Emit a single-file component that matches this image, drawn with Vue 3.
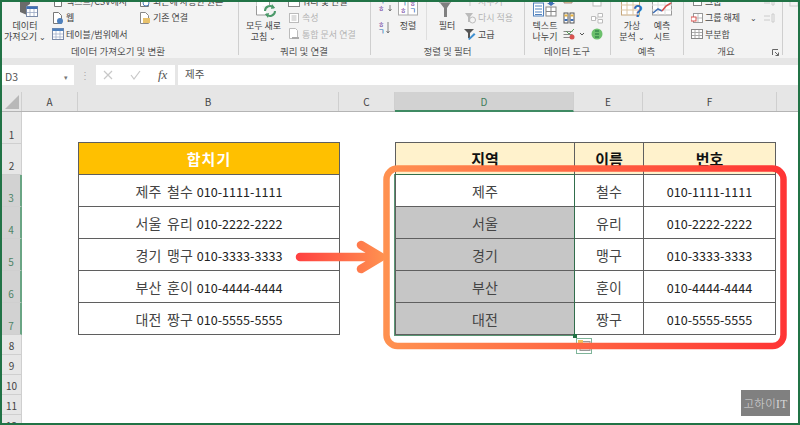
<script setup>
const colLabels = [
  { label: 'A', w: 56 },
  { label: 'B', w: 261 },
  { label: 'C', w: 56 },
  { label: 'D', w: 179, sel: true },
  { label: 'E', w: 69 },
  { label: 'F', w: 134 }
]
const rowLabels = [
  { n: 1, h: 32 }, { n: 2, h: 31 }, { n: 3, h: 32, sel: true }, { n: 4, h: 32, sel: true },
  { n: 5, h: 32, sel: true }, { n: 6, h: 32, sel: true }, { n: 7, h: 32, sel: true },
  { n: 8, h: 20 }, { n: 9, h: 20 }, { n: 10, h: 20 }, { n: 11, h: 20 }, { n: 12, h: 20 }
]
const people = [
  ['제주', '철수', '010-1111-1111'],
  ['서울', '유리', '010-2222-2222'],
  ['경기', '맹구', '010-3333-3333'],
  ['부산', '훈이', '010-4444-4444'],
  ['대전', '짱구', '010-5555-5555']
]
</script>

<template>
  <div class="app">
    <div class="ribbon">
      <section class="group g1">
        <div class="body">
          <div class="big w44">
            <svg class="bigicon" width="34" height="20" viewBox="0 0 34 20">
              <path d="M12 -4h10v8l-3 2v9l-7-3z" fill="#6b6b6b"/>
              <path d="M7 -4h6l-1 5z" fill="#e8b23c"/>
              <rect x="18.500" y="6.500" width="11" height="10" fill="#fff" stroke="#7a8aa8"/>
              <rect x="18.500" y="6.500" width="11" height="2.500" fill="#3f6fb5"/>
              <path d="M22 9v7M26 9v7M19 12.500h10" stroke="#9aa8c4" stroke-width=".8"/>
            </svg>
            <span>데이터</span><span>가져오기 <i class="chev">⌄</i></span>
          </div>
          <div class="list w87">
            <div class="item">
              <svg width="12" height="12" viewBox="0 0 12 12"><path d="M2.500 .5h7v11h-7z" fill="#fff" stroke="#777"/></svg>
              텍스트/CSV에서
            </div>
            <div class="item">
              <svg width="12" height="12" viewBox="0 0 12 12"><path d="M1.500 .5h5l3 3v8h-8z" fill="#fff" stroke="#777"/><circle cx="8" cy="9" r="3" fill="#4f81bd"/></svg>
              웹
            </div>
            <div class="item">
              <svg width="12" height="12" viewBox="0 0 12 12"><rect x=".5" y=".5" width="11" height="11" fill="#fff" stroke="#7a8aa8"/><rect x=".5" y=".5" width="11" height="2.500" fill="#4f81bd"/><path d="M4 3v8M8 3v8M1 6h10M1 9h10" stroke="#9aa8c4" stroke-width=".7"/></svg>
              테이블/범위에서
            </div>
          </div>
          <div class="list">
            <div class="item">
              <svg width="12" height="12" viewBox="0 0 12 12"><path d="M1.500 .5h8v11h-8z" fill="#fff" stroke="#777"/><circle cx="7" cy="8" r="3" fill="#fff" stroke="#4f81bd"/></svg>
              최근에 사용한 원본
            </div>
            <div class="item">
              <svg width="12" height="12" viewBox="0 0 12 12"><path d="M1.500 .5h5l3 3v8h-8z" fill="#fff" stroke="#888"/><path d="M4 6h7v5H4z" fill="#e8c26c"/></svg>
              기존 연결
            </div>
          </div>
        </div>
        <div class="label">데이터 가져오기 및 변환</div>
      </section>

      <section class="group g2">
        <div class="body">
          <div class="big w49">
            <svg class="bigicon" width="26" height="20" viewBox="0 0 26 20">
              <path d="M5.500 -3v18h11" fill="#fff" stroke="#999"/>
              <path d="M5.500 -3h13v9H5.500z" fill="#fff"/>
              <path d="M18.500 -3v8" stroke="#999"/>
              <path d="M14 11a5 5 0 0 1 9-3M24 11a5 5 0 0 1-9 3" fill="none" stroke="#4c9a6a" stroke-width="2"/>
              <path d="M21 4l3 4-4 1zM17 18l-3-4 4-1z" fill="#4c9a6a"/>
            </svg>
            <span>모두 새로</span><span>고침 <i class="chev">⌄</i></span>
          </div>
          <div class="list">
            <div class="item">
              <svg width="12" height="12" viewBox="0 0 12 12"><rect x=".5" y=".5" width="11" height="11" fill="#fff" stroke="#888"/></svg>
              쿼리 및 연결
            </div>
            <div class="item dim">
              <svg width="12" height="12" viewBox="0 0 12 12"><rect x="1.500" y="1.500" width="9" height="9" fill="#fff" stroke="#bbb"/><path d="M3.500 4h5M3.500 6h5M3.500 8h5" stroke="#bbb"/></svg>
              속성
            </div>
            <div class="item dim">
              <svg width="12" height="12" viewBox="0 0 12 12"><path d="M1.500 .5h6l2 2v8h-8z" fill="#fff" stroke="#bbb"/><path d="M4 10h7" stroke="#aaa" stroke-width="2"/></svg>
              통합 문서 연결
            </div>
          </div>
        </div>
        <div class="label">쿼리 및 연결</div>
      </section>

      <section class="group g3">
        <div class="body">
          <div class="sorts">
            <svg width="18" height="14" viewBox="0 0 18 14">
              <text x="1" y="5" class="t blue">ㄱ</text><text x="1" y="12" class="t violet">ㅎ</text>
              <path d="M13 6v6M11.500 10l1.500 2 1.500-2" fill="none" stroke="#666" stroke-width=".8"/>
            </svg>
            <svg width="18" height="14" viewBox="0 0 18 14">
              <text x="1" y="6" class="t violet">ㅎ</text><text x="1" y="13" class="t blue">ㄱ</text>
              <path d="M11 1v11M9.500 10l1.500 2 1.500-2" fill="none" stroke="#666" stroke-width=".8"/>
            </svg>
          </div>
          <div class="big w22 one">
            <svg class="bigicon" width="22" height="14" viewBox="0 0 22 14">
              <rect x="1.500" y="-2" width="19" height="15" fill="#fff" stroke="#aaa"/>
              <path d="M11 -2v15" stroke="#aaa"/>
              <text x="3" y="4" class="t blue">ㄱ</text><text x="3" y="11" class="t violet">ㅎ</text>
              <text x="12.500" y="4" class="t violet">ㅎ</text><text x="12.500" y="11" class="t blue">ㄱ</text>
            </svg>
            <span>정렬</span>
          </div>
          <div class="vline"></div>
          <div class="big w34 one">
            <svg class="bigicon" width="24" height="16" viewBox="0 0 24 16">
              <path d="M2 -3h16l-6 9v9H9V6z" fill="#7f7f7f"/>
              <path d="M2 -3h16l-2.500 4h-11z" fill="#a6a6a6"/>
            </svg>
            <span>필터</span>
          </div>
          <div class="list">
            <div class="item dim">
              <svg width="12" height="12" viewBox="0 0 12 12"><path d="M1 1h10L7 6v5H5V6z" fill="#ddd"/></svg>
              지우기
            </div>
            <div class="item dim">
              <svg width="12" height="12" viewBox="0 0 12 12"><path d="M1 1h8L6 5v5H4V5z" fill="#bbb"/><circle cx="8.500" cy="8" r="3" fill="none" stroke="#bbb"/></svg>
              다시 적용
            </div>
            <div class="item">
              <svg width="12" height="12" viewBox="0 0 12 12"><path d="M0 1h10L6 5v5H4V5z" fill="#555"/><path d="M4 11l6-6 1.500 1.500-6 5.500z" fill="#3f8fd0"/></svg>
              고급
            </div>
          </div>
        </div>
        <div class="label">정렬 및 필터</div>
      </section>

      <section class="group g4">
        <div class="body">
          <div class="big w40">
            <svg class="bigicon" width="24" height="16" viewBox="0 0 24 16">
              <rect x=".5" y="1" width="10" height="13" fill="#fff" stroke="#4f81bd"/>
              <path d="M2 4h7M2 7h7M2 10h7M2 12.500h7" stroke="#4f81bd"/>
              <rect x="13" y="5" width="10" height="9" fill="#fff" stroke="#888"/>
              <path d="M13 9.500h10M18 5v9" stroke="#888"/>
              <path d="M16 -2h4v3h2l-4 3-4-3h2z" fill="#3f6fb5"/>
            </svg>
            <span>텍스트</span><span>나누기</span>
          </div>
          <div class="toolgrid">
            <svg width="12" height="12" viewBox="0 0 12 12"><path d="M1 1h8v7H1z" fill="#eed58a" stroke="#a88"/></svg>
            <svg width="12" height="12" viewBox="0 0 12 12"><rect x="2" y="1" width="8" height="10" fill="#fff" stroke="#bbb"/></svg>
            <svg width="12" height="12" viewBox="0 0 12 12"><rect x="1" y="1" width="4" height="10" fill="#fff" stroke="#555"/><rect x="7" y="1" width="4" height="10" fill="#fff" stroke="#555"/><path d="M1.500 3.500h3M7.500 3.500h3" stroke="#e8b23c" stroke-width="2"/><path d="M1.500 8h3M7.500 8h3" stroke="#3f6fb5" stroke-width="2"/></svg>
            <svg width="12" height="12" viewBox="0 0 12 12"><path d="M.5 4.500h4v4h-4zM7 1.500h4.500v3.500H7zM7 7.500h4.500V11H7zM4.500 6H7" fill="#fff" stroke="#bbb"/></svg>
            <svg width="24" height="12" viewBox="0 0 24 12"><path d="M.5 3.500h9M.5 6.500h9M.5 9.500h9" stroke="#888"/><path d="M3 3l3 3 5-5" fill="none" stroke="#5a9e5a"/><circle cx="9" cy="9" r="2.500" fill="#d9534f"/><path d="M17 5l2 2 2-2" fill="none" stroke="#555"/></svg>
            <svg width="12" height="12" viewBox="0 0 12 12"><circle cx="6" cy="6" r="5.500" fill="#6cc06c"/><path d="M4 3h4M4 6h4M4 9h4" stroke="#1d6f3a"/></svg>
          </div>
        </div>
        <div class="label">데이터 도구</div>
      </section>

      <section class="group g5">
        <div class="body">
          <div class="big w38">
            <svg class="bigicon" width="24" height="16" viewBox="0 0 24 16">
              <rect x="1.500" y="-3" width="18" height="16" fill="#fff" stroke="#c6a77c"/>
              <path d="M7 -3v16M13 -3v16M1 3h18M1 8h18" stroke="#dcc6a4"/>
              <text x="13" y="15" class="q">?</text>
            </svg>
            <span>가상</span><span>분석 <i class="chev">⌄</i></span>
          </div>
          <div class="big w28">
            <svg class="bigicon" width="22" height="16" viewBox="0 0 22 16">
              <rect x="1.500" y="-3" width="19" height="16" fill="#fff" stroke="#999"/>
              <path d="M7 -3v16M14 -3v16M1 3h20M1 8h20" stroke="#ddd"/>
              <path d="M2 11l5-4 4 2" fill="none" stroke="#3f6fb5" stroke-width="1.600"/>
              <path d="M11 9l4-5 5-3" fill="none" stroke="#d9534f" stroke-width="1.600"/>
            </svg>
            <span>예측</span><span>시트</span>
          </div>
        </div>
        <div class="label">예측</div>
      </section>

      <section class="group g6">
        <div class="body">
          <div class="list w72">
            <div class="item">
              <svg width="12" height="12" viewBox="0 0 12 12"><rect x="2.500" y=".5" width="8" height="10" fill="#fff" stroke="#888"/></svg>
              그룹
            </div>
            <div class="item">
              <svg width="12" height="12" viewBox="0 0 12 12"><rect x="2.500" y="1.500" width="9" height="9" fill="#fff" stroke="#999"/><path d="M7 2v8M3 6h8" stroke="#bbb"/><rect x="0" y="5" width="5" height="4" fill="#fff" stroke="#d9534f"/></svg>
              그룹 해제 <i class="chev gap">⌄</i>
            </div>
            <div class="item">
              <svg width="12" height="12" viewBox="0 0 12 12"><rect x=".5" y="1.500" width="11" height="9" fill="#fff" stroke="#888"/><path d="M4 2v8M8 2v8M1 4.500h10M1 7.500h10" stroke="#aaa"/></svg>
              부분합
            </div>
          </div>
          <div class="list">
            <div class="item"><svg width="12" height="12" viewBox="0 0 12 12"><path d="M1 4h6M1 8h6M9 2h2v8H9z" fill="none" stroke="#ccc"/></svg></div>
            <div class="item"><svg width="12" height="12" viewBox="0 0 12 12"><path d="M1 4h6M1 8h6M9 2h2v8H9z" fill="none" stroke="#ccc"/></svg></div>
          </div>
        </div>
        <div class="label">개요</div>
        <svg class="launcher" width="7" height="7" viewBox="0 0 7 7"><path d="M.5 6V.5H6M3 3l3.500 3.500M6.500 3.500v3h-3" fill="none" stroke="#666"/></svg>
      </section>

      <section class="group g7">
        <div class="body">
          <div class="list">
            <div class="item"><svg width="10" height="12" viewBox="0 0 10 12"><rect x="1" y="1" width="8" height="10" fill="none" stroke="#ccc"/></svg></div>
          </div>
        </div>
      </section>
    </div>

    <div class="fbar">
      <div class="namebox"><span>D3</span><i>▾</i></div>
      <div class="grip">⋮</div>
      <div class="fxbox">
        <svg width="10" height="10" viewBox="0 0 10 10"><path d="M1 1l8 8M9 1l-8 8" stroke="#c8c8c8" stroke-width="1.200"/></svg>
        <svg width="11" height="10" viewBox="0 0 11 10"><path d="M1 5l3 4 6-8" fill="none" stroke="#c8c8c8" stroke-width="1.200"/></svg>
        <em>fx</em>
      </div>
      <div class="finput">제주</div>
    </div>

    <div class="colhead">
      <div class="corner"><div class="tri"></div></div>
      <div v-for="c in colLabels" :key="c.label" class="col" :class="{ sel: c.sel }" :style="{ width: c.w + 'px' }">{{ c.label }}</div>
    </div>

    <div class="main">
      <div class="rowhead">
        <div v-for="r in rowLabels" :key="r.n" class="row" :class="{ sel: r.sel }" :style="{ height: r.h + 'px' }">{{ r.n }}</div>
      </div>

      <div class="sheet">
        <div class="cell title">합치기</div>
        <div class="cell hd d">지역</div>
        <div class="cell hd e">이름</div>
        <div class="cell hd f">번호</div>
        <template v-for="(p, i) in people" :key="p[0]">
          <div class="cell b" :style="{ gridRow: i + 3 }"><span class="kr">{{ p[0] }} {{ p[1] }}</span><span class="num">{{ p[2] }}</span></div>
          <div class="cell d" :class="{ gray: i > 0 }" :style="{ gridRow: i + 3 }"><span class="kr">{{ p[0] }}</span></div>
          <div class="cell e" :style="{ gridRow: i + 3 }"><span class="kr">{{ p[1] }}</span></div>
          <div class="cell f" :style="{ gridRow: i + 3 }"><span class="num">{{ p[2] }}</span></div>
        </template>

        <div class="selection"></div>
        <div class="handle"></div>
        <div class="quick">
          <svg width="14" height="14" viewBox="0 0 14 14"><rect x="3" y="2.500" width="10" height="9" fill="#ddd" stroke="#999"/><path d="M1 1h5v3H1z" fill="#f0c25a"/><path d="M5 6h6M5 8h6" stroke="#888"/></svg>
        </div>

        <svg class="overlay" width="778" height="311" viewBox="0 0 778 311">
          <defs>
            <linearGradient id="fr" gradientUnits="userSpaceOnUse" x1="364" y1="0" x2="765" y2="0">
              <stop offset="0" stop-color="#ff9150"/>
              <stop offset="1" stop-color="#ff3434"/>
            </linearGradient>
            <linearGradient id="ar" gradientUnits="userSpaceOnUse" x1="274" y1="0" x2="362" y2="0">
              <stop offset="0" stop-color="#ff4040"/>
              <stop offset="1" stop-color="#ff9150"/>
            </linearGradient>
          </defs>
          <path d="M278 145H355M339 133L359 145L339 157" fill="none" stroke="url(#ar)" stroke-width="8.500" stroke-linecap="round" stroke-linejoin="round"/>
          <rect x="364.500" y="56.500" width="397" height="177.500" rx="11" fill="none" stroke="url(#fr)" stroke-width="6.500"/>
        </svg>

        <div class="mark">고하이<span>IT</span></div>
      </div>
    </div>
  </div>
</template>

<style scoped>
.app {
  width: 800px;
  height: 425px;
  box-sizing: border-box;
  border: 2px solid #217346;
  background: #fff;
  overflow: hidden;
  display: flex;
  flex-direction: column;
  font-family: "Noto Sans CJK KR", "Noto Sans", sans-serif;
  color: #444;
}
.ribbon {
  height: 56px;
  flex: none;
  background: #f3f3f3;
  display: flex;
  font-size: 9px;
  line-height: 11px;
  overflow: hidden;
}
.group {
  flex: none;
  display: flex;
  flex-direction: column;
  position: relative;
  box-sizing: border-box;
}
.group::after {
  content: "";
  position: absolute;
  right: 0;
  top: 0;
  height: 53px;
  width: 1.500px;
  background: #cfcfcf;
}
.g1 { width: 237px; padding-left: 1px; }
.g1 .label { padding-right: 6px; }
.g2 { width: 132px; }
.g3 { width: 154px; padding-left: 4px; }
.g3 .label { padding-right: 5px; }
.g4 { width: 86px; }
.g5 { width: 73px; }
.g6 { width: 99px; padding-left: 7px; }
.g6 .label { padding-right: 22px; }
.g7 { width: 15px; padding-left: 6px; }
.g7::after { display: none; }
.body {
  height: 42px;
  display: flex;
  overflow: hidden;
  flex: none;
}
.label {
  height: 14px;
  line-height: 14px;
  font-size: 9.500px;
  text-align: center;
  color: #555;
  padding-right: 2px;
}
.big {
  flex: none;
  display: flex;
  flex-direction: column;
  align-items: center;
  justify-content: flex-end;
  white-space: nowrap;
  padding-bottom: 2px;
  box-sizing: border-box;
  height: 42px;
}
.big.one { padding-bottom: 13px; }
.big span { display: block; height: 11px; }
.bigicon { flex: none; margin-bottom: auto; overflow: visible; }
.w22 { width: 22px; margin-left: 2px; }
.w28 { width: 28px; margin-left: -3px; }
.w34 { width: 34px; }
.w38 { width: 38px; margin-left: 2px; }
.w40 { width: 40px; }
.w44 { width: 44px; margin-right: 5px; }
.w49 { width: 49px; }
.w72 { width: 72px; }
.w87 { width: 87px; }
.chev { font-style: normal; font-size: 8px; }
.chev.gap { margin-left: 8px; }
.list {
  flex: none;
  margin-top: -9px;
  display: flex;
  flex-direction: column;
  white-space: nowrap;
}
.item {
  height: 16.500px;
  flex: none;
  display: flex;
  align-items: center;
  gap: 2px;
}
.item svg { flex: none; }
.dim { color: #b4b4b4; }
.sorts {
  width: 20px;
  margin-top: -3px;
  display: flex;
  flex-direction: column;
  gap: 8px;
  flex: none;
  padding-left: 2px;
  box-sizing: border-box;
}
.sorts svg { flex: none; }
.t { font-size: 7px; font-weight: 500; }
.t.violet { fill: #7c4fa8; }
.t.blue { fill: #2d6cb5; }
.vline {
  flex: none;
  width: 1px;
  height: 38px;
  margin: 0 3px 0 7px;
  background: #dedede;
}
.toolgrid {
  flex: none;
  margin-top: -9px;
  width: 44px;
  margin-left: -2px;
  display: grid;
  grid-template-columns: 28px 12px;
  grid-auto-rows: 16.500px;
  align-items: center;
}
.launcher { position: absolute; right: 4px; top: 47px; }
.q {
  font: 700 16px "Liberation Sans", sans-serif;
  fill: #2d6cb5;
}

.fbar {
  height: 27px;
  flex: none;
  box-sizing: border-box;
  padding-top: 7px;
  background: #e6e6e6;
  display: flex;
  align-items: stretch;
}
.namebox {
  width: 72px;
  background: #fff;
  display: flex;
  align-items: center;
  justify-content: space-between;
  padding: 3px 6px 0 3px;
  box-sizing: border-box;
  font-size: 10.500px;
  color: #555;
}
.namebox i { font-style: normal; font-size: 7px; color: #777; }
.grip {
  width: 22px;
  text-align: center;
  line-height: 20px;
  font-size: 10px;
  color: #aaa;
}
.fxbox {
  width: 79px;
  background: #fff;
  display: flex;
  align-items: center;
  gap: 17px;
  padding-left: 7px;
  box-sizing: border-box;
}
.fxbox em {
  font: italic 13px "Liberation Serif", serif;
  color: #555;
}
.finput {
  flex: 1;
  margin-left: 3px;
  background: #fff;
  padding-left: 7px;
  font-size: 10.500px;
  line-height: 18px;
  color: #555;
}

.colhead {
  height: 27px;
  flex: none;
  box-sizing: border-box;
  padding-top: 7px;
  background: #e6e6e6;
  display: flex;
  border-bottom: 1px solid #b4b4b4;
  font-size: 10px;
  line-height: 19px;
  color: #444;
}
.corner {
  width: 20px;
  flex: none;
  position: relative;
  border-right: 1px solid #cfcfcf;
  box-sizing: border-box;
}
.tri {
  position: absolute;
  right: 2px;
  bottom: 2px;
  width: 0;
  height: 0;
  border-style: solid;
  border-width: 0 0 14px 14px;
  border-color: transparent transparent #b8b8b8 transparent;
}
.col {
  flex: none;
  box-sizing: border-box;
  text-align: center;
  border-right: 1px solid #cfcfcf;
}
.col.sel {
  background: #d2d2d2;
  color: #3f7d5c;
  border-bottom: 2px solid #3f8a63;
  height: 20px;
}

.main { flex: 1; display: flex; min-height: 0; }
.rowhead {
  width: 20px;
  flex: none;
  background: #e6e6e6;
  font-size: 10px;
  color: #444;
}
.row {
  box-sizing: border-box;
  border-bottom: 1px solid #cfcfcf;
  border-right: 1px solid #cfcfcf;
  display: flex;
  align-items: flex-end;
  justify-content: center;
  line-height: 17px;
}
.row.sel {
  background: #d2d2d2;
  color: #4f8467;
  border-right: 2px solid #6aa584;
}

.sheet {
  position: relative;
  flex: 1;
  display: grid;
  grid-template-columns: 57px 261px 56px 179px 69px 132px;
  grid-template-rows: 31px repeat(6, 32px);
  align-content: start;
}
.cell {
  margin: -1px 0 0 -1px;
  border: 1px solid #5f5f5f;
  display: flex;
  align-items: center;
  justify-content: center;
  gap: 4px;
  white-space: nowrap;
  background: #fff;
  box-sizing: border-box;
}
.kr {
  font-size: 14px;
  word-spacing: 2.500px;
  color: #444;
}
.num {
  font-size: 12.600px;
  color: #222;
  padding-top: 1px;
}
.title {
  grid-column: 2;
  grid-row: 2;
  background: #ffc000;
  color: #fff;
  font-size: 15px;
  font-weight: 700;
  letter-spacing: 1px;
}
.hd {
  grid-row: 2;
  background: #fff2cc;
  color: #111;
  font-size: 15px;
  font-weight: 700;
}
.b { grid-column: 2; }
.d { grid-column: 4; }
.e { grid-column: 5; }
.f { grid-column: 6; }
.gray { background: #c6c6c6; }
.selection {
  position: absolute;
  left: 372px;
  top: 62px;
  width: 181px;
  height: 162px;
  box-sizing: border-box;
  border: 1.500px solid #217346;
  opacity: .75;
  pointer-events: none;
}
.handle {
  position: absolute;
  left: 551px;
  top: 222px;
  width: 4px;
  height: 4px;
  background: #217346;
}
.quick {
  position: absolute;
  left: 554px;
  top: 226px;
  width: 16px;
  height: 16px;
  box-sizing: border-box;
  border: 1px solid #7fb59a;
  display: flex;
  align-items: center;
  justify-content: center;
  background: #fff;
}
.overlay {
  position: absolute;
  left: 0;
  top: 0;
  pointer-events: none;
}
.mark {
  position: absolute;
  left: 719px;
  top: 278px;
  width: 49px;
  height: 26px;
  background: #808080;
  color: #d8d8d8;
  font: 300 11.500px/26px "Noto Sans CJK KR", sans-serif;
  text-align: center;
  letter-spacing: .3px;
  white-space: nowrap;
  overflow: hidden;
}
.mark span { font-family: "Liberation Serif", serif; color: #d8d8d8; }
</style>
